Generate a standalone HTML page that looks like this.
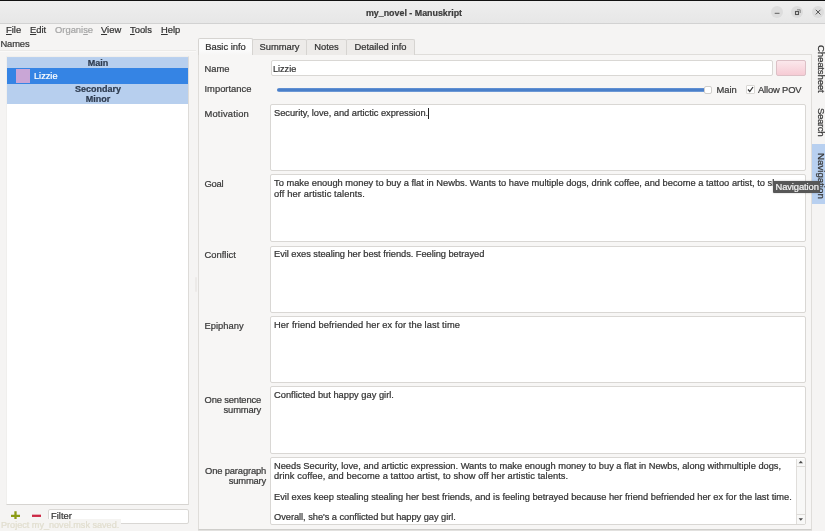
<!DOCTYPE html>
<html><head><meta charset="utf-8"><title>my_novel - Manuskript</title>
<style>
*{box-sizing:border-box;margin:0;padding:0}
html,body{width:825px;height:531px;overflow:hidden}
body{background:#f5f4f3;font-family:"Liberation Sans","DejaVu Sans",sans-serif;font-size:9.4px;color:#3a3a3a;position:relative}
.abs{position:absolute;white-space:nowrap;-webkit-text-stroke:0.22px currentColor}
#titlebar{left:0;top:0;width:825px;height:24px;background:linear-gradient(#eeeeee,#e7e7e7);border-top:1px solid #111;border-bottom:1px solid #d2d2d2}
#title{left:0;width:825px;top:6.5px;text-align:center;font-weight:bold;font-size:8.9px;color:#3c3c3c;line-height:12px;padding-left:3px}
.wbtn{width:12px;height:12px;border-radius:50%;background:#dddddd;top:6px}
.menu{top:23px;line-height:13px;font-size:9.4px;color:#333}
.menu u{text-decoration:underline;text-underline-offset:1px}
.lbl{color:#3a3a3a;line-height:12px}
.box{background:#fff;border:1px solid #d9d7d4;border-radius:2px}
.txt{color:#333;line-height:11px;font-size:9.3px;white-space:nowrap}
.tab{top:39px;height:16px;border:1px solid #d6d4d1;border-bottom:none;background:#edebe9;text-align:center;line-height:14px;color:#333;border-radius:2px 2px 0 0}
.vt{writing-mode:vertical-rl;color:#333;line-height:13px;font-size:9.7px}
.hdr{left:8px;width:180px;text-align:center;font-weight:bold;color:#2e3c50;line-height:11px;font-size:9px}
</style></head><body><div style="position:absolute;left:0;top:0;width:825px;height:531px;will-change:transform;opacity:0.999">
<div id="titlebar" class="abs"></div>
<div id="title" class="abs">my_novel - Manuskript</div>
<div class="abs wbtn" style="left:771px"></div>
<div class="abs wbtn" style="left:791px"></div>
<div class="abs wbtn" style="left:812px"></div>
<svg class="abs" style="left:765px;top:0" width="60" height="25" viewBox="0 0 60 25">
 <path d="M9.7 13.3h4.8" stroke="#606060" stroke-width="1" fill="none"/>
 <rect x="30.5" y="11.5" width="3" height="3" stroke="#555" stroke-width="1.1" fill="none"/>
 <path d="M32 9.8h3.2v3.2" stroke="#777" stroke-width="0.9" fill="none"/>
 <path d="M50.8 9.8l4.6 4.6m0-4.6l-4.6 4.6" stroke="#505050" stroke-width="1" fill="none"/>
</svg>

<div id="m1" class="abs menu" style="left:6px"><u>F</u>ile</div>
<div id="m2" class="abs menu" style="left:30px"><u>E</u>dit</div>
<div id="m3" class="abs menu" style="left:55px;color:#a5a5a5">Organi<u>s</u>e</div>
<div id="m4" class="abs menu" style="left:101px"><u>V</u>iew</div>
<div id="m5" class="abs menu" style="left:130px"><u>T</u>ools</div>
<div id="m6" class="abs menu" style="left:161px"><u>H</u>elp</div>

<div id="names" class="abs lbl" style="left:0.5px;top:38px;letter-spacing:-0.15px">Names</div>

<!-- left list -->
<div class="abs" style="left:0;top:50px;width:196px;height:1px;background:#ebeae8"></div>
<div class="abs" style="left:0;top:51px;width:196px;height:1px;background:#faf9f8"></div>
<div class="abs box" style="left:6px;top:56px;width:183px;height:449px;border-radius:0;border-color:#f0efed #dddbd8 #d6d4d1 #f0efed"></div>
<div class="abs" style="left:7px;top:57px;width:181px;height:11px;background:linear-gradient(#dbe6f6 0,#b7cfee 5%)"></div>
<div class="abs" style="left:7px;top:68px;width:181px;height:16px;background:#3584e4"></div>
<div class="abs" style="left:7px;top:84px;width:181px;height:20px;background:#b7cfee"></div>
<div class="abs" style="left:16px;top:69px;width:14px;height:14px;background:#c9a6d6"></div>
<div id="lmain" class="abs hdr" style="top:58px">Main</div>
<div id="lliz" class="abs" style="left:34px;top:70px;color:#fff;line-height:12px;font-size:9.2px">Lizzie</div>
<div id="lsec" class="abs hdr" style="top:84px">Secondary</div>
<div id="lmin" class="abs hdr" style="top:94px">Minor</div>

<!-- bottom left -->
<svg class="abs" style="left:8px;top:508px" width="40" height="16" viewBox="0 0 40 16">
 <path d="M7.5 3.3v9M3 7.8h9" stroke="#8b9b14" stroke-width="2.3" fill="none"/>
 <path d="M24 7.8h9" stroke="#cc2845" stroke-width="2.3" fill="none"/>
</svg>
<div class="abs box" style="left:48px;top:509px;width:141px;height:15px;border-radius:2px"></div>
<div id="filter" class="abs" style="left:51px;top:509px;line-height:13px;color:#333">Filter</div>
<div class="abs" style="left:0;top:519px;width:121px;height:12px;background:#f5f4f2"></div>
<div id="status" class="abs" style="left:1px;top:518.5px;line-height:13px;color:#e1decf;font-size:9.1px">Project my_novel.msk saved.</div>

<!-- right pane -->
<div class="abs" style="left:195px;top:277px;width:2px;height:15px;background:#eceae8;border-radius:1px"></div>
<div class="abs" style="left:198px;top:530px;width:614px;height:1px;background:#e2e1df"></div>
<div class="abs" style="left:198px;top:54px;width:614px;height:476px;border:1px solid #dfddda;border-bottom-color:#cfcecb;background:#f7f6f5"></div>
<div id="t1" class="abs tab" style="left:198px;width:55px;top:38px;height:17px;background:linear-gradient(#fbfbfb 70%,#f7f6f5);line-height:15px">Basic info</div>
<div id="t2" class="abs tab" style="left:252px;width:55px">Summary</div>
<div id="t3" class="abs tab" style="left:306px;width:41px">Notes</div>
<div id="t4" class="abs tab" style="left:346px;width:69px">Detailed info</div>

<div id="l1" class="abs lbl" style="left:204.5px;top:62.5px">Name</div>
<div id="l2" class="abs lbl" style="left:204.5px;top:82.5px">Importance</div>
<div id="l3" class="abs lbl" style="left:204.5px;top:107.5px;letter-spacing:0.17px">Motivation</div>
<div id="l4" class="abs lbl" style="left:204.5px;top:177.5px;letter-spacing:-0.25px">Goal</div>
<div id="l5" class="abs lbl" style="left:204.5px;top:248.5px">Conflict</div>
<div id="l6" class="abs lbl" style="left:204.5px;top:319.5px">Epiphany</div>
<div id="l7" class="abs lbl" style="left:204.5px;top:395px;line-height:10.2px;text-align:right;letter-spacing:-0.15px">One sentence<br>summary</div>
<div id="l8" class="abs lbl" style="left:205px;top:466px;line-height:10.2px;text-align:right;letter-spacing:-0.15px">One paragraph<br>summary</div>

<div class="abs box" style="left:271px;top:60px;width:502px;height:16px"></div>
<div id="nm" class="abs txt" style="left:273px;top:63px;line-height:12px;font-size:9.1px">Lizzie</div>
<div class="abs" style="left:776px;top:60px;width:30px;height:16px;border:1px solid #dcc0c6;border-radius:2px;background:linear-gradient(#fbe8ec,#f6cbd4)"></div>

<div class="abs" style="left:276.5px;top:88px;width:430px;height:3.5px;background:linear-gradient(#6e99d7 0,#4a7fc9 30%,#4a7fc9 75%,#8eb0e0 100%);border-radius:2px"></div>
<div class="abs" style="left:704px;top:86px;width:8px;height:8px;background:#fff;border:1px solid #d0cecb;border-radius:2px"></div>
<div id="main2" class="abs lbl" style="left:716.5px;top:84px">Main</div>
<div class="abs" style="left:746px;top:85px;width:9px;height:9px;background:#fff;border:1px solid #d9d7d4;border-radius:1px"></div>
<svg class="abs" style="left:746px;top:85px" width="9" height="9" viewBox="0 0 9 9"><path d="M2 4.5l1.8 2L7 2" stroke="#333" stroke-width="1.2" fill="none"/></svg>
<div id="pov" class="abs lbl" style="left:758px;top:84px;letter-spacing:-0.15px">Allow POV</div>

<div class="abs box" style="left:270px;top:104px;width:536px;height:67px"></div>
<div class="abs box" style="left:270px;top:174px;width:536px;height:68px"></div>
<div class="abs box" style="left:270px;top:246px;width:536px;height:67px"></div>
<div class="abs box" style="left:270px;top:316px;width:536px;height:67px"></div>
<div class="abs box" style="left:270px;top:386px;width:536px;height:68px"></div>
<div class="abs box" style="left:270px;top:457px;width:536px;height:68px"></div>

<div id="x1" class="abs txt" style="left:274px;top:108px;letter-spacing:-0.03px">Security, love, and artictic expression.</div>
<div class="abs" style="left:428px;top:108px;width:1px;height:11px;background:#222"></div>
<div id="x2" class="abs txt" style="left:274px;top:178px">To make enough money to buy a flat in Newbs. Wants to have multiple dogs, drink coffee, and become a tattoo artist, to show</div>
<div id="x2b" class="abs txt" style="left:274px;top:189px;letter-spacing:0.11px">off her artistic talents.</div>
<div id="x3" class="abs txt" style="left:274px;top:249px;letter-spacing:-0.05px">Evil exes stealing her best friends. Feeling betrayed</div>
<div id="x4" class="abs txt" style="left:274px;top:320px;letter-spacing:0.09px">Her friend befriended her ex for the last time</div>
<div id="x5" class="abs txt" style="left:274px;top:390px">Conflicted but happy gay girl.</div>
<div id="x6" class="abs txt" style="left:274px;top:461px;letter-spacing:-0.016px">Needs Security, love, and artictic expression. Wants to make enough money to buy a flat in Newbs, along withmultiple dogs,</div>
<div id="x6b" class="abs txt" style="left:274px;top:471px;letter-spacing:0.076px">drink coffee, and become a tattoo artist, to show off her artistic talents.</div>
<div id="x6c" class="abs txt" style="left:274px;top:492px">Evil exes keep stealing stealing her best friends, and is feeling betrayed because her friend befriended her ex for the last time.</div>
<div id="x6d" class="abs txt" style="left:274px;top:512px;letter-spacing:-0.05px">Overall, she's a conflicted but happy gay girl.</div>

<!-- scrollbar -->
<div class="abs" style="left:796px;top:459px;width:9px;height:65px;background:#f8f8f7;border-left:1px solid #e0dedb"></div>
<svg class="abs" style="left:796px;top:459px" width="9" height="65" viewBox="0 0 9 65"><path d="M2.6 4.3l2.2-2.6 2.2 2.6z" fill="#4a4a4a"/><path d="M2.6 59.2l2.2 2.6 2.2-2.6z" fill="#4a4a4a"/><path d="M0 7.5h9M0 55.5h9" stroke="#dddbd8"/></svg>

<!-- right dock -->
<div class="abs" style="left:812px;top:144px;width:13px;height:60px;background:#b8d0f0"></div>
<div id="v1" class="abs vt" style="left:814.5px;top:45px;letter-spacing:-0.2px">Cheatsheet</div>
<div id="v2" class="abs vt" style="left:814.5px;top:108px;letter-spacing:-0.4px">Search</div>
<div id="v3" class="abs vt" style="left:814.5px;top:153px">Navigation</div>
<div class="abs" style="left:773px;top:181px;width:47px;height:12px;background:#575757;border-radius:1px;box-shadow:0 0 2px rgba(0,0,0,.25)"></div>
<div id="tip" class="abs" style="left:775.5px;top:181px;color:#f4f4f4;line-height:12px;letter-spacing:-0.1px">Navigation</div>
</div></body></html>
